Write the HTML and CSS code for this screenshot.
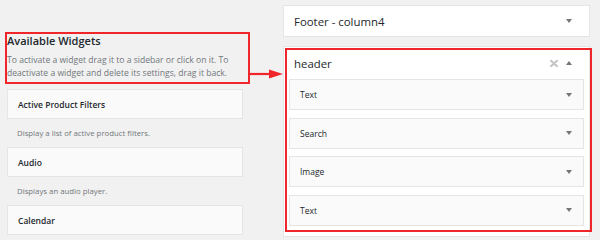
FILE: index.html
```html
<!DOCTYPE html>
<html>
<head>
<meta charset="utf-8">
<link rel="stylesheet" href="styles.css">
</head>
<body>
<div class="page">
  <div class="left">
    <div class="intro">
      <h2 class="intro-title">Available Widgets</h2>
      <p class="intro-desc">To activate a widget drag it to a sidebar or click on it. To deactivate a widget and delete its settings, drag it back.</p>
    </div>
    <div class="avail">
      <div class="wtop">Active Product Filters</div>
      <div class="wdesc">Display a list of active product filters.</div>
    </div>
    <div class="avail">
      <div class="wtop">Audio</div>
      <div class="wdesc">Displays an audio player.</div>
    </div>
    <div class="avail">
      <div class="wtop">Calendar</div>
    </div>
  </div>
  <div class="right">
    <div class="sidebar closed">
      <div class="sb-name"><span class="sb-title">Footer - column4</span><span class="tri down"></span></div>
    </div>
    <div class="sidebar open">
      <div class="sb-name"><span class="sb-title">header</span><span class="sb-icons"><svg class="xicon" width="8" height="7" viewBox="0 0 8 7"><path d="M1 0.8 L7 6.2 M7 0.8 L1 6.2" stroke="#c3c5c8" stroke-width="2.2" stroke-linecap="round"/></svg><span class="tri up"></span></span></div>
      <div class="items">
        <div class="item"><span>Text</span><span class="tri down"></span></div>
        <div class="item"><span>Search</span><span class="tri down"></span></div>
        <div class="item"><span>Image</span><span class="tri down"></span></div>
        <div class="item"><span>Text</span><span class="tri down"></span></div>
      </div>
    </div>
    <div class="sidebar next"></div>
  </div>
</div>
<div class="mark mark-left"></div>
<div class="mark mark-right"></div>
<svg class="arrow" width="34" height="12" viewBox="0 0 34 12"><line x1="0" y1="6" x2="22" y2="6" stroke="#f0262b" stroke-width="2.2"/><polygon points="19,1.5 33,6 19,10.5" fill="#f0262b"/></svg>
</body>
</html>
```
FILE: styles.css
```css
html, body {
  margin: 0;
  padding: 0;
}
body {
  background: #f1f1f1;
  font-family: "Open Sans", "DejaVu Sans", sans-serif;
  color: #23282d;
  width: 600px;
  height: 240px;
  overflow: hidden;
  position: relative;
}
.page {
  display: flex;
  gap: 40px;
  padding: 5px 0 0 7px;
}
.left {
  width: 236px;
  display: flex;
  flex-direction: column;
}
.intro {
  padding-top: 29px;
  height: 84px;
  box-sizing: border-box;
}
.intro-title {
  margin: 0;
  font-size: 11px;
  font-weight: 600;
  line-height: 14px;
  color: #23282d;
}
.intro-desc {
  margin: 5.5px 0 0 0;
  font-size: 8.6px;
  line-height: 13px;
  color: #72777c;
}
.avail {
  display: flex;
  flex-direction: column;
}
.wtop {
  height: 28px;
  background: #fafafa;
  border: 1px solid #e5e5e5;
  padding-left: 10px;
  display: flex;
  align-items: center;
  font-size: 8.5px;
  font-weight: 600;
}
.wdesc {
  height: 28px;
  padding-left: 10px;
  display: flex;
  align-items: center;
  font-size: 7.8px;
  color: #72777c;
}
.right {
  width: 307px;
  display: flex;
  flex-direction: column;
  gap: 9px;
}
.sidebar {
  background: #fff;
  border: 1px solid #e5e5e5;
  box-sizing: border-box;
}
.sb-name {
  height: 30px;
  display: flex;
  align-items: center;
  justify-content: space-between;
  padding: 0 17px 0 10px;
  font-size: 11.4px;
  font-weight: 500;
}
.open .sb-name {
  height: 32px;
}
.sb-icons {
  display: flex;
  align-items: center;
  gap: 8px;
}
.xicon {
  display: block;
}
.tri {
  width: 0;
  height: 0;
  border-left: 3px solid transparent;
  border-right: 3px solid transparent;
}
.tri.down {
  border-top: 4px solid #72777c;
}
.tri.up {
  border-bottom: 4px solid #72777c;
}
.items {
  display: flex;
  flex-direction: column;
  gap: 7.5px;
  padding: 0 5px 10px 5px;
}
.item {
  height: 29px;
  background: #fafafa;
  border: 1px solid #e5e5e5;
  display: flex;
  align-items: center;
  justify-content: space-between;
  padding: 0 11px 0 10px;
  font-size: 8.5px;
  font-weight: 500;
}
.next {
  height: 20px;
}
.mark {
  position: absolute;
  border: 2px solid #f0262b;
  box-sizing: border-box;
}
.mark-left {
  left: 5px;
  top: 32px;
  width: 245px;
  height: 52px;
}
.mark-right {
  left: 285px;
  top: 48px;
  width: 307px;
  height: 184px;
}
.arrow {
  position: absolute;
  left: 250px;
  top: 68px;
}
```
